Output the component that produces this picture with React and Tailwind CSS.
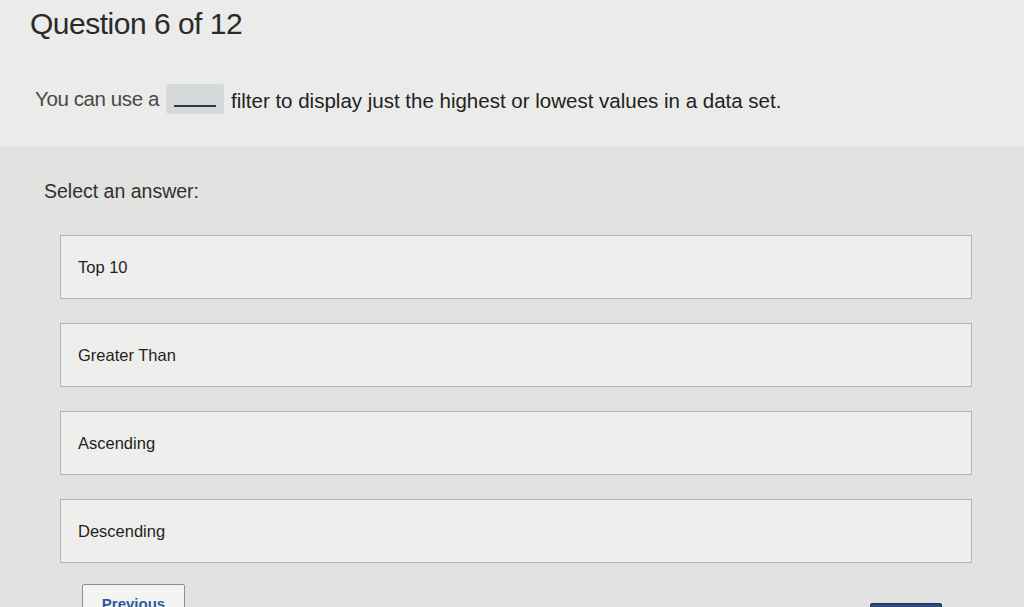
import React from "react";

const options = ["Top 10", "Greater Than", "Ascending", "Descending"];

const App = () => {
  return (
    <div className="w-full h-[607px] overflow-hidden bg-[#e2e2e0] font-['Liberation_Sans',Arial,sans-serif]">
      {/* Question header */}
      <div className="h-[146px] bg-[#ebebe9] px-[30px] pt-[6px]">
        <h1 className="text-[30px] leading-[36px] text-[#2a2a2a] tracking-[-0.5px]">
          Question 6 of 12
        </h1>
        <p className="mt-[40px] flex items-center text-[20.5px] text-[#222]">
          <span className="ml-[5px] text-[#484848] tracking-[-0.4px]">You can use a</span>
          <span className="ml-[7px] mr-[7px] w-[58px] h-[30px] rounded-[3px] bg-[#d6d9db] flex items-end justify-center pb-[7px]">
            <span className="block w-[42px] h-[2px] bg-[#3a3a3a]" />
          </span>
          <span className="mt-[4px]">
            filter to display just the highest or lowest values in a data set.
          </span>
        </p>
      </div>

      {/* Answers */}
      <div className="pt-[33px]">
        <p className="ml-[44px] text-[19.5px] leading-[24px] text-[#303030]">
          Select an answer:
        </p>
        <div className="mt-[32px] ml-[60px] w-[912px] flex flex-col gap-[24px]">
          {options.map((opt) => (
            <button
              key={opt}
              className="h-[64px] w-full bg-[#eeeeec] border border-[#b4b4b2] text-left px-[17px] text-[16.5px] text-[#1f1f1f]"
            >
              {opt}
            </button>
          ))}
        </div>

        {/* Nav */}
        <div className="mt-[21px] flex items-start justify-between pl-[82px] pr-[82px]">
          <button className="w-[103px] h-[36px] bg-[#f4f4f2] border border-[#8a8d92] rounded-[2px] text-[15px] font-bold text-[#2d5b9a] pt-[4px]">
            Previous
          </button>
          <button className="mt-[19px] w-[72px] h-[34px] bg-[#2b4a7c] border border-[#1f355c] rounded-[2px] text-white text-[15px] font-bold">
            Next
          </button>
        </div>
      </div>
    </div>
  );
};

export default App;
